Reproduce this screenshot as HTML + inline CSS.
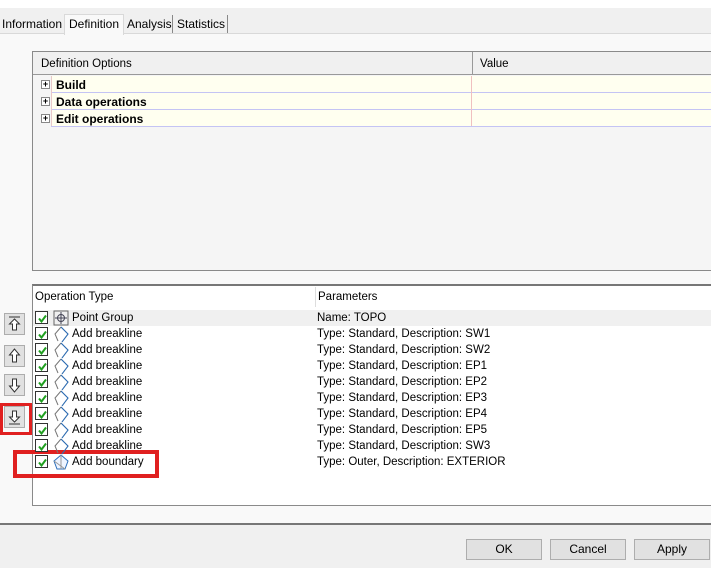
<!DOCTYPE html>
<html><head><style>
*{margin:0;padding:0;box-sizing:border-box}
body{width:711px;height:568px;background:#f0f0f0;font-family:"Liberation Sans",sans-serif;font-size:11.5px;color:#000;position:relative;overflow:hidden}
.a{position:absolute}
.t{position:absolute;white-space:nowrap}
.cb{position:absolute;left:35px;width:13px;height:13px;border:1px solid #333;background:#fff}
.cb svg{position:absolute;left:1px;top:1px}
.btn{position:absolute;background:#e1e1e1;border:1px solid #adadad;text-align:center;line-height:19px;font-size:12px}
.ab{position:absolute;left:4px;width:21px;height:22px;background:#e1e1e1;border:1px solid #adadad}
</style></head><body>
<div class="a" style="left:0;top:0;width:711px;height:8px;background:#fff"></div>
<div class="a" style="left:0;top:33px;width:711px;height:1px;background:#d9d9d9"></div>
<div class="a" style="left:0;top:34px;width:711px;height:490px;background:#f9f9f9"></div>
<div class="t" style="left:2px;top:17px;font-size:12px">Information</div>
<div class="a" style="left:64px;top:14px;width:60px;height:21px;background:#f9f9f9;border:1px solid #d9d9d9;border-bottom:none"></div>
<div class="t" style="left:69px;top:17px;font-size:12px">Definition</div>
<div class="t" style="left:127px;top:17px;font-size:12px">Analysis</div>
<div class="a" style="left:172px;top:15px;width:1px;height:18px;background:#888"></div>
<div class="t" style="left:177px;top:17px;font-size:12px">Statistics</div>
<div class="a" style="left:227px;top:15px;width:1px;height:18px;background:#888"></div>
<div class="a" style="left:32px;top:51px;width:680px;height:220px;background:#f5f5f5;border:1px solid #8a8a8a;border-right:none"></div>
<div class="a" style="left:33px;top:52px;width:678px;height:23px;background:#f0f0f0;border-bottom:1px solid #999"></div>
<div class="a" style="left:472px;top:52px;width:1px;height:23px;background:#999"></div>
<div class="t" style="left:41px;top:58px">Definition Options</div>
<div class="t" style="left:480px;top:58px">Value</div>
<div class="a" style="left:51px;top:76px;width:660px;height:51px;background:#fffff0"></div>
<div class="a" style="left:51px;top:92px;width:660px;height:1px;background:#c4c4f4"></div>
<div class="a" style="left:51px;top:109px;width:660px;height:1px;background:#c4c4f4"></div>
<div class="a" style="left:51px;top:126px;width:660px;height:1px;background:#c4c4f4"></div>
<div class="a" style="left:51px;top:76px;width:1px;height:50px;background:#e8c8c8"></div>
<div class="a" style="left:471px;top:76px;width:1px;height:50px;background:#f0c0c0"></div>
<div class="a" style="left:41px;top:80px;width:9px;height:9px;border:1px solid #888;background:#fff;font-size:9px;line-height:7px;text-align:center;font-weight:bold">+</div>
<div class="a" style="left:41px;top:97px;width:9px;height:9px;border:1px solid #888;background:#fff;font-size:9px;line-height:7px;text-align:center;font-weight:bold">+</div>
<div class="a" style="left:41px;top:114px;width:9px;height:9px;border:1px solid #888;background:#fff;font-size:9px;line-height:7px;text-align:center;font-weight:bold">+</div>
<div class="t" style="left:56px;top:78px;font-weight:bold;font-size:12px">Build</div>
<div class="t" style="left:56px;top:95px;font-weight:bold;font-size:12px">Data operations</div>
<div class="t" style="left:56px;top:112px;font-weight:bold;font-size:12px">Edit operations</div>
<div class="a" style="left:32px;top:284px;width:680px;height:222px;background:#fff;border:1px solid #8a8a8a;border-top:2px solid #777;border-right:none"></div>
<div class="a" style="left:315px;top:287px;width:1px;height:20px;background:#ddd"></div>
<div class="t" style="left:35px;top:291px">Operation Type</div>
<div class="t" style="left:318px;top:291px">Parameters</div>
<div class="a" style="left:33px;top:310px;width:678px;height:16px;background:#f0f0f0"></div>
<div class="ab" style="top:313px"><svg width="19" height="20"><path d="M4 3h11M9.5 5l-5 5h3v6h4v-6h3z" fill="#fff" stroke="#333"/></svg></div>
<div class="ab" style="top:345px"><svg width="19" height="20"><path d="M9.5 3l-5 6h3v7h4v-7h3z" fill="#fff" stroke="#333"/></svg></div>
<div class="ab" style="top:374px"><svg width="19" height="20"><path d="M9.5 17l-5-6h3v-7h4v7h3z" fill="#fff" stroke="#333"/></svg></div>
<div class="ab" style="top:406px"><svg width="19" height="20"><path d="M4 17h11M9.5 15l-5-5h3v-6h4v6h3z" fill="#fff" stroke="#333"/></svg></div>
<div class="a" style="left:0;top:403px;width:32px;height:32px;border:3px solid #e02020"></div>
<div class="a" style="left:13px;top:450px;width:146px;height:28px;border:4px solid #e02020"></div>
<div id="rows"></div>
<script>
var r=[["Point Group","Name: TOPO"],["Add breakline","Type: Standard,  Description: SW1"],["Add breakline","Type: Standard,  Description: SW2"],["Add breakline","Type: Standard,  Description: EP1"],["Add breakline","Type: Standard,  Description: EP2"],["Add breakline","Type: Standard,  Description: EP3"],["Add breakline","Type: Standard,  Description: EP4"],["Add breakline","Type: Standard,  Description: EP5"],["Add breakline","Type: Standard,  Description: SW3"],["Add boundary","Type: Outer,  Description: EXTERIOR"]];
var h="";
r.forEach(function(x,i){var y=311+i*16;
h+='<div class="cb" style="top:'+y+'px"><svg width="11" height="11"><path d="M2 5.5l2.5 3L9 2.5" fill="none" stroke="#20a020" stroke-width="2"/></svg></div>';
var ic=i==0?'<rect x="1" y="1" width="14" height="14" fill="none" stroke="#666"/><circle cx="8" cy="8" r="3.5" fill="none" stroke="#445"/><path d="M8 2v12M2 8h12" stroke="#445"/>':(i==9?'<path d="M8 1l7 6-3 8H4L1 7z" fill="#eef4ff" stroke="#2a6ebb"/><path d="M8 1v14M1 7l11 8" stroke="#999"/>':'<path d="M8 1l7 7-6 8M8 1L2 8l3 7" fill="none" stroke="#777"/><path d="M8 1l7 7-6 8" fill="none" stroke="#2a6ebb"/>');
h+='<svg class="a" style="left:53px;top:'+(y-1)+'px" width="16" height="17">'+ic+'</svg>';
h+='<div class="t" style="left:72px;top:'+(y+1)+'px">'+x[0]+'</div><div class="t" style="left:317px;top:'+(y+1)+'px;white-space:pre">'+x[1].replace("  "," ")+'</div>';});
document.getElementById("rows").innerHTML=h;
</script>
<div class="a" style="left:0;top:523px;width:711px;height:2px;background:#777"></div>
<div class="btn" style="left:466px;top:539px;width:76px;height:21px">OK</div>
<div class="btn" style="left:550px;top:539px;width:76px;height:21px">Cancel</div>
<div class="btn" style="left:634px;top:539px;width:76px;height:21px">Apply</div>
</body></html>
